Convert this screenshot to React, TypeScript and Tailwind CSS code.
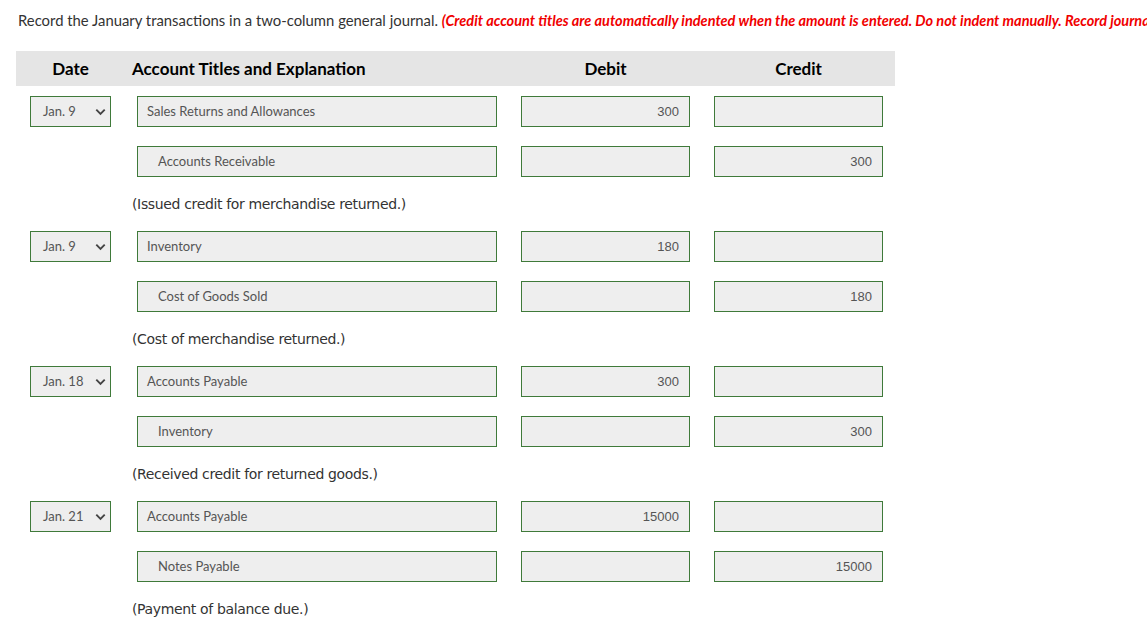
import React from 'react';

interface Entry {
  date: string;
  debitAccount: string;
  debitAmount: string;
  creditAccount: string;
  creditAmount: string;
  explanation: string;
}

const entries: Entry[] = [
  {
    date: 'Jan. 9',
    debitAccount: 'Sales Returns and Allowances',
    debitAmount: '300',
    creditAccount: 'Accounts Receivable',
    creditAmount: '300',
    explanation: '(Issued credit for merchandise returned.)',
  },
  {
    date: 'Jan. 9',
    debitAccount: 'Inventory',
    debitAmount: '180',
    creditAccount: 'Cost of Goods Sold',
    creditAmount: '180',
    explanation: '(Cost of merchandise returned.)',
  },
  {
    date: 'Jan. 18',
    debitAccount: 'Accounts Payable',
    debitAmount: '300',
    creditAccount: 'Inventory',
    creditAmount: '300',
    explanation: '(Received credit for returned goods.)',
  },
  {
    date: 'Jan. 21',
    debitAccount: 'Accounts Payable',
    debitAmount: '15000',
    creditAccount: 'Notes Payable',
    creditAmount: '15000',
    explanation: '(Payment of balance due.)',
  },
];

const lato = "font-['Lato','Liberation_Sans',sans-serif]";
const boxBase = 'h-[31px] border border-[#3f7a3a] bg-[#eeeeee] flex items-center';

const DateSelect: React.FC<{ value: string }> = ({ value }) => (
  <div className={`${boxBase} w-[81px] pl-[12px] pr-[4px] justify-between ${lato} text-[13px] text-[#555]`}>
    <span>{value}</span>
    <svg width="11" height="8" viewBox="0 0 11 8">
      <path d="M1.3 1.6 L5.5 5.8 L9.7 1.6" fill="none" stroke="#444" strokeWidth="1.9" />
    </svg>
  </div>
);

const AccountBox: React.FC<{ value: string; indent?: boolean }> = ({ value, indent }) => (
  <div
    className={`${boxBase} w-[360px] ${indent ? 'pl-[20px]' : 'pl-[9px]'} ${lato} text-[13px] text-[#555]`}
  >
    {value}
  </div>
);

const AmountBox: React.FC<{ value?: string }> = ({ value }) => (
  <div
    className={`${boxBase} w-[169px] justify-end pr-[10px] font-['Liberation_Sans',Arial,sans-serif] text-[13px] text-[#555]`}
  >
    {value}
  </div>
);

const EntryBlock: React.FC<{ entry: Entry }> = ({ entry }) => (
  <div className="pt-[10px]">
    <div className="flex">
      <div className="w-[109px] flex justify-center">
        <DateSelect value={entry.date} />
      </div>
      <div className="w-[384px] pl-[12px]">
        <AccountBox value={entry.debitAccount} />
      </div>
      <div className="w-[193px] flex justify-center">
        <AmountBox value={entry.debitAmount} />
      </div>
      <div className="w-[193px] flex justify-center">
        <AmountBox />
      </div>
    </div>
    <div className="flex mt-[19px]">
      <div className="w-[109px]" />
      <div className="w-[384px] pl-[12px]">
        <AccountBox value={entry.creditAccount} indent />
      </div>
      <div className="w-[193px] flex justify-center">
        <AmountBox />
      </div>
      <div className="w-[193px] flex justify-center">
        <AmountBox value={entry.creditAmount} />
      </div>
    </div>
    <div className="h-[44px] pt-[17px] pl-[116px]">
      <p className="leading-[20px] text-[14px] tracking-[-0.35px] text-[#333] font-['DejaVu_Sans',Verdana,sans-serif]">
        {entry.explanation}
      </p>
    </div>
  </div>
);

export default function App() {
  return (
    <div className="w-[1147px] h-[636px] overflow-hidden bg-white">
      <div className="h-[29px] pt-[11px] pl-[18px] overflow-hidden">
        <p className={`whitespace-nowrap leading-[18px] text-[14.85px] text-[#333] ${lato}`}>
          Record the January transactions in a two-column general journal.{' '}
          <span className="font-bold italic text-[14.5px] text-[#f00000]">
            (Credit account titles are automatically indented when the amount is entered. Do not
            indent manually. Record journal entries in the order presented in the problem.)
          </span>
        </p>
      </div>
      <div className="ml-[16px] mt-[22px] w-[879px]">
        <div className={`flex h-[35px] items-center bg-[#e5e5e5] font-bold text-[17px] text-black ${lato}`}>
          <div className="w-[109px] text-center">Date</div>
          <div className="w-[384px] pl-[7px]">Account Titles and Explanation</div>
          <div className="w-[193px] text-center">Debit</div>
          <div className="w-[193px] text-center">Credit</div>
        </div>
        {entries.map((entry, i) => (
          <EntryBlock key={i} entry={entry} />
        ))}
      </div>
    </div>
  );
}
